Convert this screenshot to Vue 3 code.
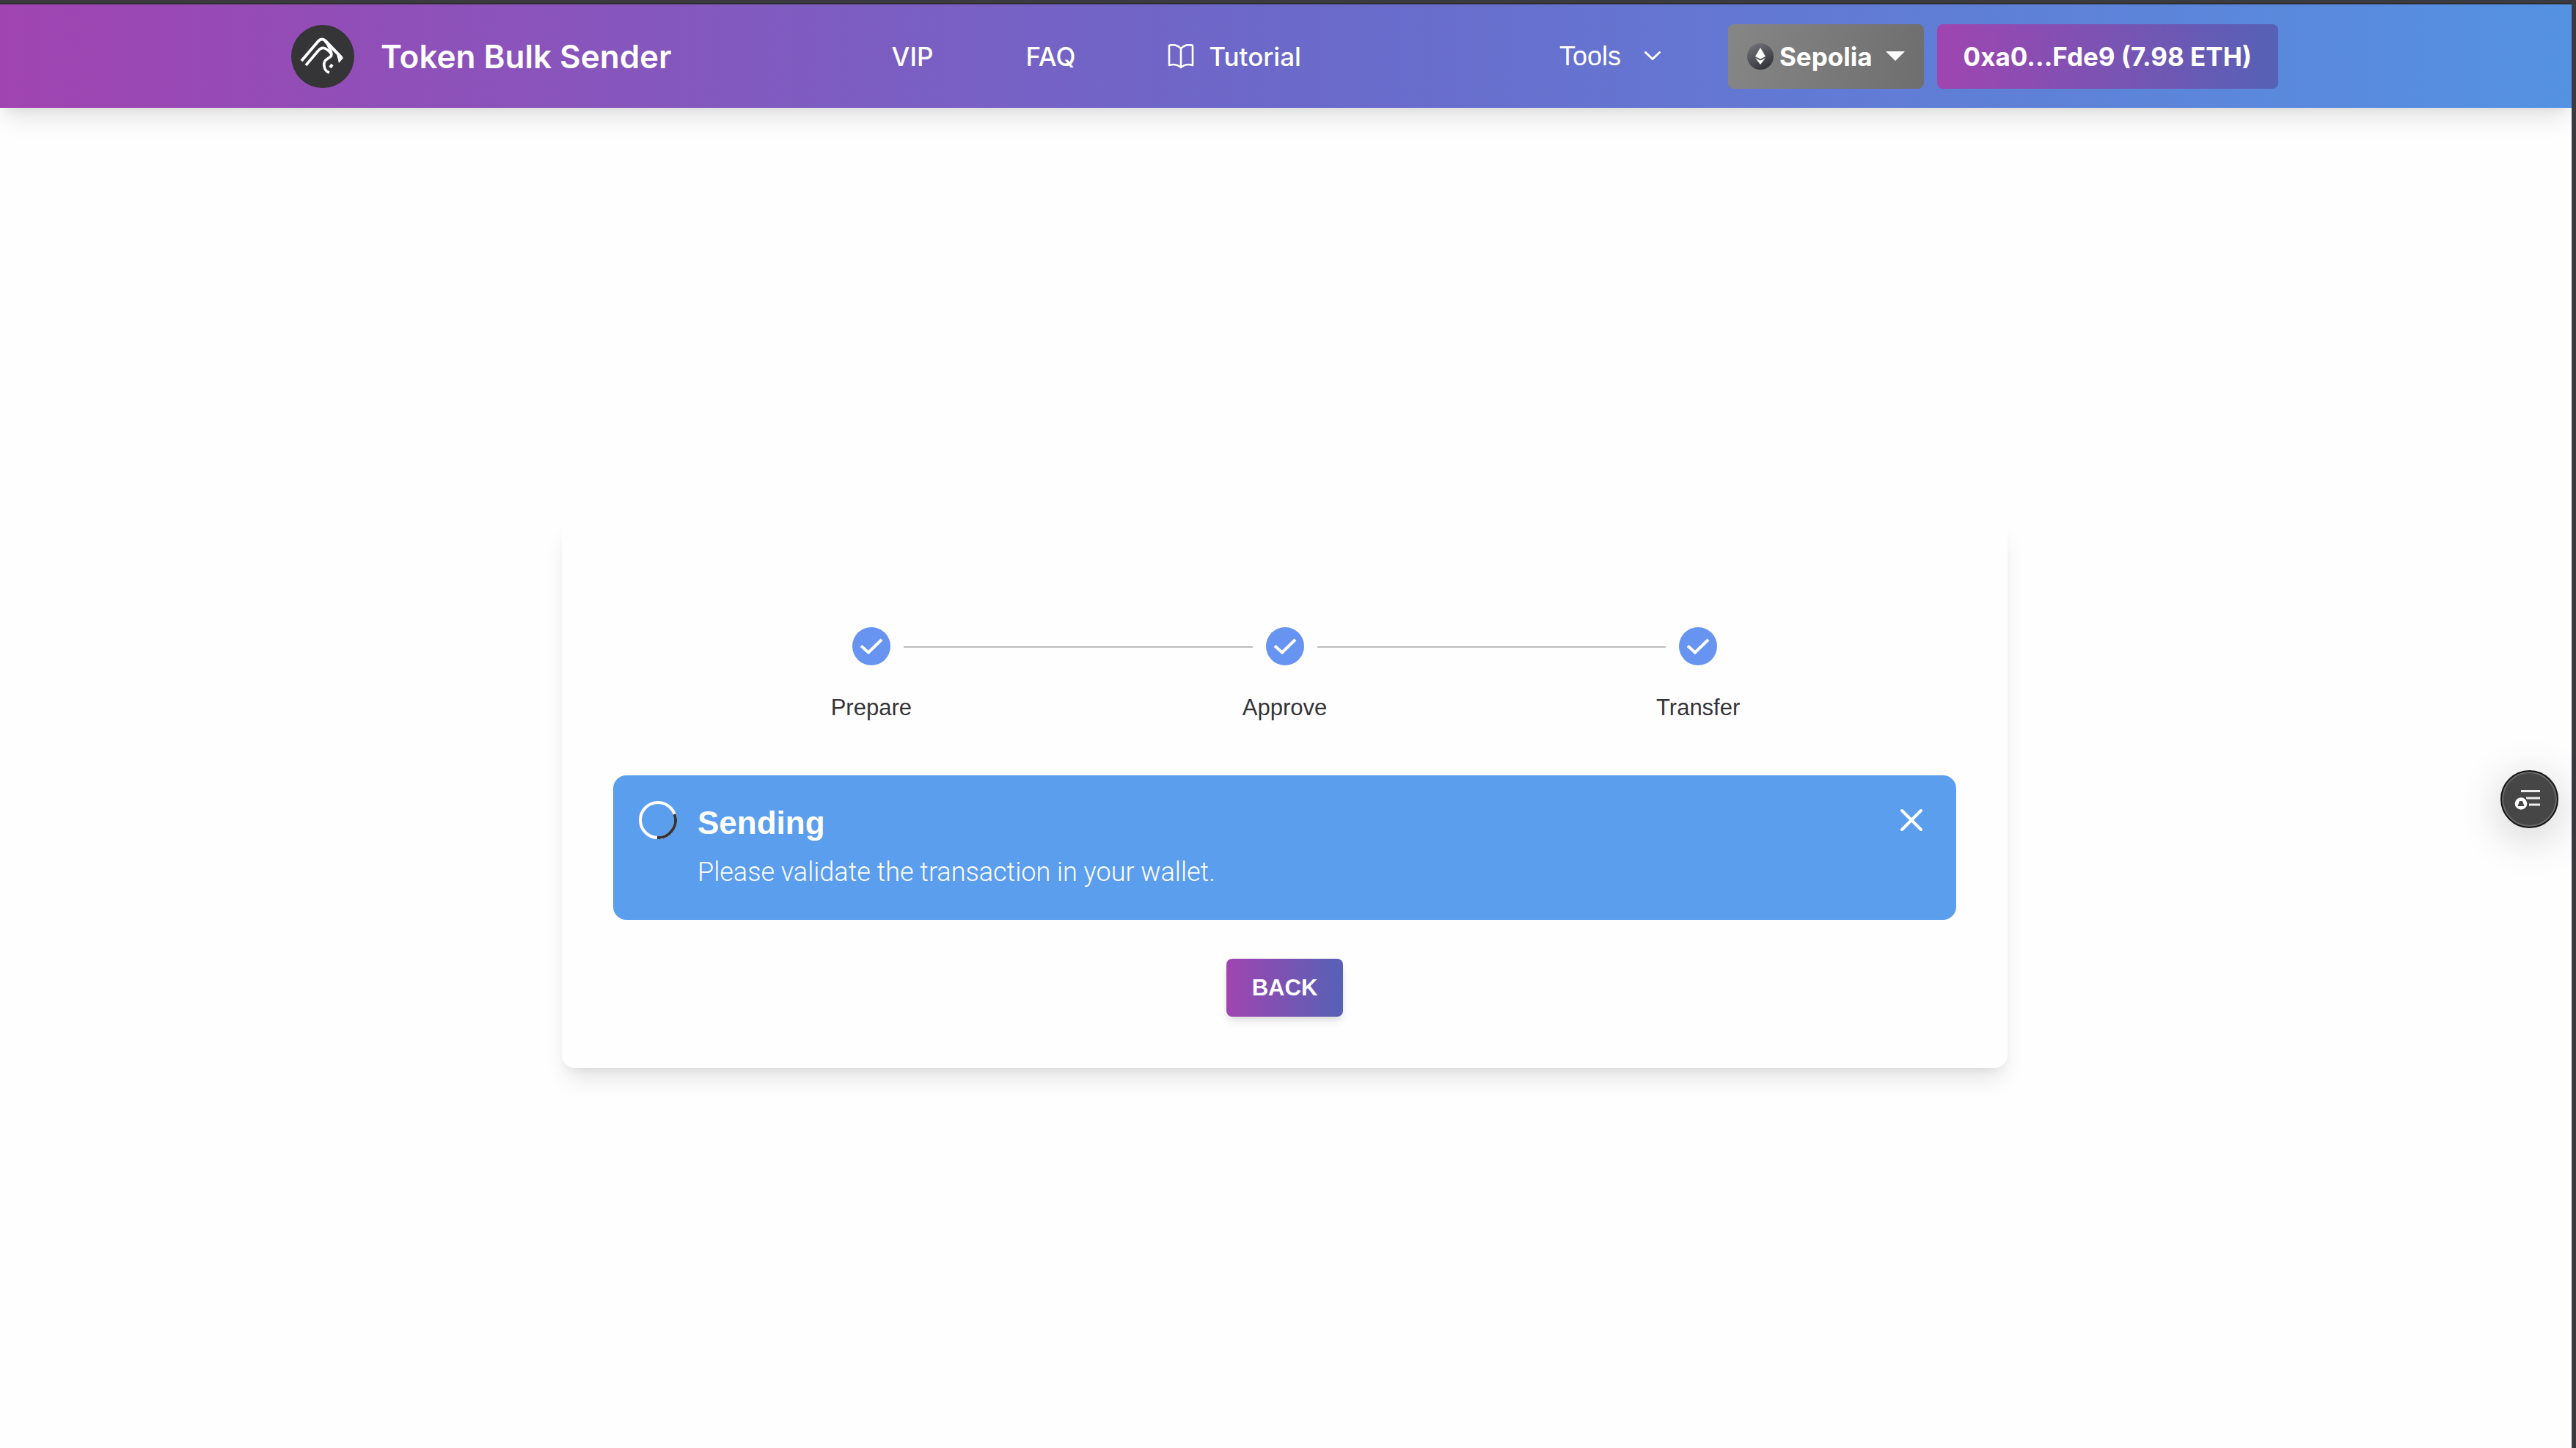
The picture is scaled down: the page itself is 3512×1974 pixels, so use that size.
<script setup>
const links = [
  { label: 'VIP' },
  { label: 'FAQ' },
  { label: 'Tutorial', icon: true },
]
const steps = ['Prepare', 'Approve', 'Transfer']
</script>

<template>
  <div class="page">
    <header class="header">
      <div class="bar">
        <a class="brand" href="#">
          <svg class="logo" viewBox="0 0 86 86" aria-hidden="true">
            <circle cx="43" cy="43" r="43" fill="#353436" />
            <g fill="none" stroke="#fff" stroke-width="4">
              <path d="M14 49 L37 22 Q42 17 47 22 L69 45" />
              <path d="M20 55 L37 35 Q42 29 48 33 Q57 39 54 43 L47 48 Q43 52 46 60 Q48 64 52 65" stroke-width="3.6" />
              <path d="M46 22 C52 29 50 29 54 35 Q56 39 54 43" stroke-width="3" />
              <path d="M53 58 L56 54" />
            </g>
            <path d="M62 40 L71 45 L65 52 Z" fill="#fff" />
          </svg>
          <span class="title">Token Bulk Sender</span>
        </a>
        <nav class="nav">
          <a v-for="link in links" :key="link.label" class="link" href="#">
            <svg v-if="link.icon" class="book" viewBox="0 0 36 34" aria-hidden="true">
              <path
                d="M18 6 Q11 -1 2 2 V29 Q11 26 18 32 Q25 26 34 29 V2 Q25 -1 18 6 V31"
                fill="none"
                stroke="#fff"
                stroke-width="2.6"
                stroke-linejoin="round"
              />
            </svg>
            {{ link.label }}
          </a>
        </nav>
        <div class="actions">
          <button class="tools" type="button">
            Tools
            <svg class="chevron" viewBox="0 0 22 13" aria-hidden="true">
              <path d="M1.5 1.5 L11 10.5 L20.5 1.5" fill="none" stroke="#fff" stroke-width="3" stroke-linecap="round" stroke-linejoin="round" />
            </svg>
          </button>
          <button class="pill network" type="button">
            <svg class="coin" viewBox="0 0 36 36" aria-hidden="true">
              <defs>
                <linearGradient id="coin" x1="0" y1="0" x2="0.5" y2="1">
                  <stop offset="0" stop-color="#76777d" />
                  <stop offset="1" stop-color="#37383d" />
                </linearGradient>
              </defs>
              <circle cx="18" cy="18" r="18" fill="url(#coin)" />
              <path d="M18 6 L25 18 L18 21.500 L11 18 Z M11 20 L18 23.500 L25 20 L18 29 Z" fill="#fff" />
            </svg>
            Sepolia
            <svg class="caret" viewBox="0 0 26 13" aria-hidden="true">
              <path d="M0 0 H26 L13 13 Z" fill="#fff" />
            </svg>
          </button>
          <button class="pill wallet" type="button">0xa0...Fde9 (7.98 ETH)</button>
        </div>
      </div>
    </header>

    <main class="main">
      <section class="card">
        <ol class="steps">
          <li v-for="step in steps" :key="step" class="step">
            <svg class="check" viewBox="0 0 52 52" aria-hidden="true">
              <circle cx="26" cy="26" r="26" fill="#6694f0" />
              <path d="M12 25.500 L22 34.500 L40 17" fill="none" stroke="#fff" stroke-width="4" />
            </svg>
            <span class="label">{{ step }}</span>
          </li>
        </ol>
        <div class="alert" role="status">
          <svg class="spinner" viewBox="0 0 52 52" aria-hidden="true">
            <g fill="none" stroke-width="4">
              <circle cx="26" cy="26" r="24" stroke="#fff" />
              <path d="M48.500 18 A24 24 0 0 1 25 50" stroke="#353436" />
            </g>
          </svg>
          <div class="message">
            <h2 class="heading">Sending</h2>
            <p class="text">Please validate the transaction in your wallet.</p>
          </div>
          <button class="close" type="button" aria-label="Close">
            <svg class="cross" viewBox="0 0 32 32" aria-hidden="true">
              <path d="M3 3 L29 29 M29 3 L3 29" stroke="#fff" stroke-width="4" stroke-linecap="round" />
            </svg>
          </button>
        </div>
        <button class="back" type="button">BACK</button>
      </section>
    </main>

    <button class="float" type="button" aria-label="Open side panel">
      <svg class="panel" viewBox="0 0 36 28" aria-hidden="true">
        <path d="M9 2.500 H35 M16 12 H35 M20 21 H35" stroke="#eee" stroke-width="3" />
        <circle cx="9" cy="19.500" r="10" fill="#464646" />
        <circle cx="9" cy="19.500" r="8.300" fill="#fff" />
        <path d="M7 16 H11 L13.500 23 H4.500 Z" fill="#464646" />
      </svg>
    </button>
  </div>
</template>

<style>
body {
  margin: 0;
  background: #fefefe;
}
</style>

<style scoped>
.page {
  box-sizing: border-box;
  min-height: 100vh;
  border-right: 6px solid #3b3a3e;
  font-family: "Liberation Sans", Arial, sans-serif;
  font-size: 36px;
  overflow: hidden;
}
button {
  border: 0;
  padding: 0;
  background: none;
  color: #fff;
  font: inherit;
  cursor: pointer;
}
a {
  color: #fff;
  text-decoration: none;
}
svg {
  display: block;
  flex: none;
}
.page::before {
  content: "";
  display: block;
  height: 4px;
  margin-right: -6px;
  background: #3b3a3e;
  border-bottom: 2px solid #2f2e33;
}
.header {
  padding-right: 3px;
  background: linear-gradient(90deg, #a044b1, #6b69ca 50%, #5592e1);
  box-shadow: 0 20px 30px -6px rgba(0, 0, 0, 0.1), 0 8px 12px -4px rgba(0, 0, 0, 0.05);
}
.bar {
  display: flex;
  align-items: center;
  box-sizing: border-box;
  max-width: 2709px;
  height: 141px;
  margin: 0 auto;
}
.brand {
  display: flex;
  align-items: center;
  gap: 36px;
}
.logo {
  width: 86px;
  height: 86px;
}
.title {
  font-family: Inter, sans-serif;
  font-size: 44px;
  font-weight: 600;
}
.nav {
  display: flex;
  gap: 126px;
  margin-left: 300px;
  font-family: Inter, sans-serif;
  font-size: 35px;
  font-weight: 500;
}
.link {
  display: flex;
  align-items: center;
  gap: 20px;
}
.book {
  width: 36px;
  height: 34px;
}
.actions {
  display: flex;
  align-items: center;
  margin-left: auto;
}
.tools {
  display: flex;
  align-items: center;
  gap: 32px;
  margin-right: 92px;
}
.chevron {
  width: 22px;
  height: 13px;
}
.pill {
  display: flex;
  align-items: center;
  height: 88px;
  border-radius: 8px;
  font-family: Inter, sans-serif;
  font-size: 35px;
  font-weight: 700;
}
.network {
  gap: 8px;
  margin-right: 18px;
  padding: 0 26px;
  background: linear-gradient(100deg, #868686, #6e6e6e);
}
.coin {
  width: 36px;
  height: 36px;
}
.caret {
  width: 26px;
  height: 13px;
  margin-left: 10px;
}
.wallet {
  padding: 0 36px;
  background: linear-gradient(90deg, #9f45b0, #5661b6);
}
.main {
  padding: 563px 39px 0 36px;
}
.card {
  display: flex;
  flex-direction: column;
  align-items: center;
  box-sizing: border-box;
  max-width: 1971px;
  margin: 0 auto;
  padding: 70px;
  border-radius: 18px;
  background: #fefefe;
  box-shadow: 0 20px 30px -6px rgba(0, 0, 0, 0.1), 0 8px 12px -4px rgba(0, 0, 0, 0.05);
}
.steps {
  display: flex;
  align-self: stretch;
  margin: 0;
  padding: 75px 70px 72px;
  list-style: none;
}
.step {
  position: relative;
  display: flex;
  flex: 1;
  flex-direction: column;
  align-items: center;
  gap: 38px;
}
.step + .step::before {
  content: "";
  position: absolute;
  top: 26px;
  right: calc(50% + 44px);
  left: calc(-50% + 44px);
  border-top: 2px solid #bdbdbd;
}
.check {
  width: 52px;
  height: 52px;
}
.label {
  color: #353436;
  font-size: 31px;
  line-height: 40px;
}
.alert {
  display: flex;
  align-self: stretch;
  box-sizing: border-box;
  min-height: 197px;
  padding: 35px;
  border-radius: 18px;
  background: #5c9eee;
  color: #fff;
}
.spinner {
  width: 52px;
  height: 52px;
}
.message {
  flex: 1;
  margin-left: 28px;
}
.heading {
  margin: 0;
  font-size: 44px;
  font-weight: 700;
  line-height: 60px;
}
.text {
  margin: 10px 0 0;
  font-family: Roboto, sans-serif;
  font-size: 36px;
  font-weight: 300;
  line-height: 54px;
}
.close {
  align-self: flex-start;
  padding: 10px;
}
.cross {
  width: 32px;
  height: 32px;
}
.back {
  height: 79px;
  margin-top: 53px;
  padding: 0 35px;
  border-radius: 8px;
  background: linear-gradient(90deg, #9f45b0, #5661b6);
  box-shadow: 0 8px 12px -2px rgba(0, 0, 0, 0.1), 0 4px 8px -2px rgba(0, 0, 0, 0.06);
  font-size: 31px;
  font-weight: 700;
}
.float {
  position: fixed;
  top: 1050px;
  right: 24px;
  display: flex;
  align-items: center;
  justify-content: center;
  box-sizing: border-box;
  width: 79px;
  height: 79px;
  border: 2px solid #161616;
  border-radius: 50%;
  background: #464646;
  box-shadow: inset 0 0 0 2px #6a6a6a, 0 12px 60px rgba(0, 0, 0, 0.2);
}
.panel {
  width: 36px;
  height: 28px;
  margin-right: 6px;
}
</style>
